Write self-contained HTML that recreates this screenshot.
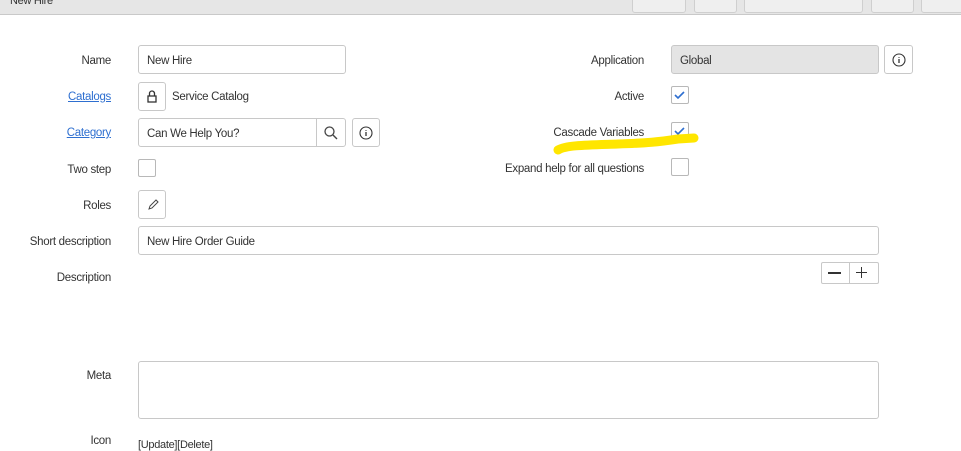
<!DOCTYPE html>
<html><head><style>
body{margin:0;width:961px;height:449px;overflow:hidden;background:#fff;font-family:"Liberation Sans",sans-serif;font-size:11.5px;color:#333;position:relative;letter-spacing:-0.3px}
.a{position:absolute}
.hdr{left:0;top:0;width:961px;height:14px;background:#e6e6e6;border-bottom:1px solid #c9c9c9}
.hb{top:-4px;height:15px;border:1px solid #cfcfcf;border-radius:3px;background:#efefef}
.lbl{text-align:right;width:200px}
.in{border:1px solid #c8c8c8;border-radius:3px;background:#fff;box-sizing:border-box;padding-left:8px;line-height:30px}
.btn{border:1px solid #c8c8c8;border-radius:3px;background:#fff;box-sizing:border-box}
.cb{width:18px;height:18px;border:1px solid #b8b8b8;border-radius:2px;box-sizing:border-box;background:#fff}
a{color:#2e6fd0;text-decoration:underline}
</style></head><body>
<div class="a hdr"></div>
<div class="a" style="left:10px;top:-5px;font-size:11px;color:#333">New Hire</div>
<div class="a hb" style="left:632px;width:52px"></div>
<div class="a hb" style="left:694px;width:41px"></div>
<div class="a hb" style="left:744px;width:117px"></div>
<div class="a hb" style="left:871px;width:41px"></div>
<div class="a hb" style="left:921px;width:45px"></div>

<div class="a lbl" style="left:-89px;top:55px">Name</div>
<div class="a in" style="left:138px;top:45px;width:208px;height:29px">New Hire</div>
<div class="a lbl" style="left:-89px;top:91px"><a>Catalogs</a></div>
<div class="a btn" style="left:138px;top:82px;width:28px;height:29px"><svg width="26" height="27"><rect x="9" y="13" width="8" height="6" fill="none" stroke="#333" stroke-width="1.3"/><path d="M10.5 13v-2.5a2.5 2.5 0 0 1 5 0V13" fill="none" stroke="#333" stroke-width="1.3"/></svg></div>
<div class="a" style="left:172px;top:91px">Service Catalog</div>
<div class="a lbl" style="left:-89px;top:127px"><a>Category</a></div>
<div class="a in" style="left:138px;top:118px;width:208px;height:29px">Can We Help You?</div>
<div class="a" style="left:316px;top:118px;width:1px;height:29px;background:#c8c8c8"></div>
<svg class="a" style="left:323px;top:125px" width="16" height="16"><circle cx="6.5" cy="6.5" r="4.5" fill="none" stroke="#444" stroke-width="1.3"/><path d="M10 10l4 4" stroke="#444" stroke-width="1.4"/></svg>
<div class="a btn" style="left:352px;top:118px;width:28px;height:29px"><svg width="26" height="27"><circle cx="13" cy="14" r="6" fill="none" stroke="#333" stroke-width="1.1"/><path d="M13 13v4M13 11v.8" stroke="#333" stroke-width="1.3"/></svg></div>
<div class="a lbl" style="left:-89px;top:164px">Two step</div>
<div class="a cb" style="left:138px;top:159px"></div>
<div class="a lbl" style="left:-89px;top:200px">Roles</div>
<div class="a btn" style="left:138px;top:190px;width:28px;height:29px"><svg width="26" height="27"><path d="M10 18l1-3 6-6 2 2-6 6z" fill="none" stroke="#444" stroke-width="1"/></svg></div>
<div class="a lbl" style="left:-89px;top:236px">Short description</div>
<div class="a in" style="left:138px;top:226px;width:741px;height:29px">New Hire Order Guide</div>
<div class="a lbl" style="left:-89px;top:272px">Description</div>
<div class="a btn" style="left:821px;top:262px;width:58px;height:22px;border-radius:2px"></div>
<div class="a" style="left:849px;top:262px;width:1px;height:22px;background:#c8c8c8"></div>
<div class="a" style="left:828px;top:272px;width:13px;height:2px;background:#333"></div>
<div class="a" style="left:856px;top:272px;width:11px;height:1px;background:#333"></div>
<div class="a" style="left:861px;top:267px;width:1px;height:11px;background:#333"></div>
<div class="a lbl" style="left:-89px;top:370px">Meta</div>
<div class="a in" style="left:138px;top:361px;width:741px;height:58px"></div>
<div class="a lbl" style="left:-89px;top:435px">Icon</div>
<div class="a" style="left:138px;top:439px;font-size:11px">[Update][Delete]</div>

<div class="a lbl" style="left:444px;top:55px">Application</div>
<div class="a in" style="left:671px;top:45px;width:208px;height:29px;background:#e4e4e4">Global</div>
<div class="a btn" style="left:884px;top:45px;width:29px;height:29px"><svg width="27" height="27"><circle cx="14" cy="14" r="6" fill="none" stroke="#333" stroke-width="1.1"/><path d="M14 13v4M14 11v.8" stroke="#333" stroke-width="1.3"/></svg></div>
<div class="a lbl" style="left:444px;top:91px">Active</div>
<div class="a cb" style="left:671px;top:86px"><svg width="16" height="16"><path d="M3 8l3 3 6-6" fill="none" stroke="#2e6fd0" stroke-width="1.6"/></svg></div>
<div class="a lbl" style="left:444px;top:127px">Cascade Variables</div>
<div class="a cb" style="left:671px;top:122px"><svg width="16" height="16"><path d="M3 8l3 3 6-6" fill="none" stroke="#2e6fd0" stroke-width="1.6"/></svg></div>
<div class="a lbl" style="left:444px;top:163px">Expand help for all questions</div>
<div class="a cb" style="left:671px;top:158px"></div>
<svg class="a" style="left:550px;top:130px" width="155" height="30"><path d="M8 20c8-5 30-5 60-6s40-2 60-5l16-1" fill="none" stroke="#ffe600" stroke-width="9" stroke-linecap="round"/></svg>
</body></html>
